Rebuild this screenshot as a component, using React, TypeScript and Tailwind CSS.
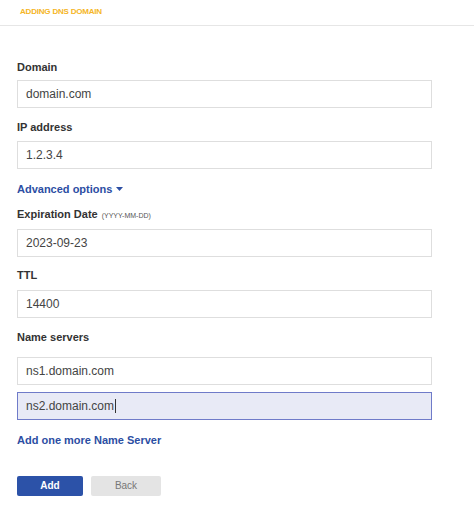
import React from 'react';

const Field: React.FC<{ value: string; active?: boolean }> = ({ value, active }) => (
  <div
    className={
      active
        ? 'flex h-[28px] w-[415px] items-center border border-[#6f7bc9] bg-[#e8eaf6] pl-[8px] text-[12px] text-[#444]'
        : 'flex h-[28px] w-[415px] items-center border border-[#dedede] bg-white pl-[8px] text-[12px] text-[#444]'
    }
  >
    {value}
    {active && <span className="ml-[1px] inline-block h-[14px] w-px bg-[#333]" />}
  </div>
);

const Label: React.FC<{ children: React.ReactNode }> = ({ children }) => (
  <div className="text-[11px] font-bold leading-[14px] text-[#333]">{children}</div>
);

export default function App() {
  return (
    <div className="h-[506px] w-[474px] bg-white font-['Liberation_Sans',Arial,sans-serif]">
      <div className="flex h-[26px] items-center border-b border-[#e6e6e6] pl-[20px] pb-[2px]">
        <span className="text-[8px] font-bold tracking-[-0.2px] text-[#f5b526]">ADDING DNS DOMAIN</span>
      </div>

      <div className="flex flex-col pl-[17px] pt-[34px]">
        <Label>Domain</Label>
        <div className="mt-[6px]"><Field value="domain.com" /></div>

        <div className="mt-[12px]"><Label>IP address</Label></div>
        <div className="mt-[7px]"><Field value="1.2.3.4" /></div>

        <div className="mt-[13px] flex items-center gap-[4px] text-[11px] font-bold leading-[14px] text-[#2c4ea3]">
          Advanced options
          <svg width="7" height="4" viewBox="0 0 7 4"><path d="M0 0h7L3.5 4z" fill="#2c4ea3" /></svg>
        </div>

        <div className="mt-[11px] flex items-baseline gap-[4px]">
          <Label>Expiration Date</Label>
          <span className="text-[7px] text-[#555]">(YYYY-MM-DD)</span>
        </div>
        <div className="mt-[7px]"><Field value="2023-09-23" /></div>

        <div className="mt-[11px]"><Label>TTL</Label></div>
        <div className="mt-[8px]"><Field value="14400" /></div>

        <div className="mt-[12px]"><Label>Name servers</Label></div>
        <div className="mt-[13px]"><Field value="ns1.domain.com" /></div>
        <div className="mt-[7px]"><Field value="ns2.domain.com" active /></div>

        <div className="mt-[13px] text-[11px] font-bold leading-[14px] text-[#2c4ea3]">Add one more Name Server</div>

        <div className="mt-[29px] flex gap-[8px]">
          <button className="h-[20px] w-[66px] rounded-[2px] bg-[#2c52a8] text-[10px] font-bold text-white">Add</button>
          <button className="h-[20px] w-[70px] rounded-[2px] bg-[#e4e4e4] text-[10px] text-[#777]">Back</button>
        </div>
      </div>
    </div>
  );
}
